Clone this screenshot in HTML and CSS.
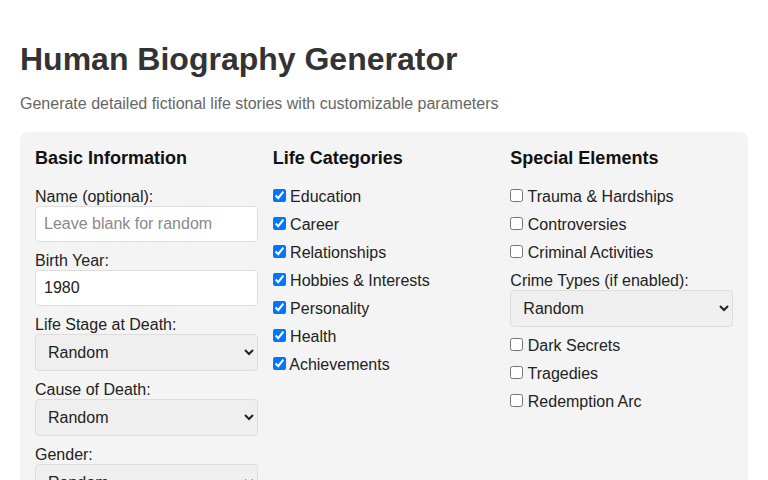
FILE: index.html
```html
<!DOCTYPE html>
<html>
<head>
<meta charset="utf-8">
<title>Human Biography Generator</title>
<link rel="stylesheet" href="styles.css">
</head>
<body>
<div class="container">
  <h1>Human Biography Generator</h1>
  <p class="subtitle">Generate detailed fictional life stories with customizable parameters</p>
  <div class="card">
    <div class="column">
      <h3>Basic Information</h3>
      <div class="form-group">
        <label class="field-label" for="name">Name (optional):</label>
        <input type="text" id="name" placeholder="Leave blank for random">
      </div>
      <div class="form-group">
        <label class="field-label" for="year">Birth Year:</label>
        <input type="text" id="year" value="1980">
      </div>
      <div class="form-group">
        <label class="field-label" for="stage">Life Stage at Death:</label>
        <select id="stage"><option>Random</option></select>
      </div>
      <div class="form-group">
        <label class="field-label" for="cause">Cause of Death:</label>
        <select id="cause"><option>Random</option></select>
      </div>
      <div class="form-group">
        <label class="field-label" for="gender">Gender:</label>
        <select id="gender"><option>Random</option></select>
      </div>
    </div>
    <div class="column">
      <h3>Life Categories</h3>
      <label class="check"><input type="checkbox" checked> Education</label>
      <label class="check"><input type="checkbox" checked> Career</label>
      <label class="check"><input type="checkbox" checked> Relationships</label>
      <label class="check"><input type="checkbox" checked> Hobbies &amp; Interests</label>
      <label class="check"><input type="checkbox" checked> Personality</label>
      <label class="check"><input type="checkbox" checked> Health</label>
      <label class="check"><input type="checkbox" checked> Achievements</label>
    </div>
    <div class="column">
      <h3>Special Elements</h3>
      <label class="check"><input type="checkbox"> Trauma &amp; Hardships</label>
      <label class="check"><input type="checkbox"> Controversies</label>
      <label class="check"><input type="checkbox"> Criminal Activities</label>
      <div class="form-group">
        <label class="field-label" for="crime">Crime Types (if enabled):</label>
        <select id="crime"><option>Random</option></select>
      </div>
      <label class="check"><input type="checkbox"> Dark Secrets</label>
      <label class="check"><input type="checkbox"> Tragedies</label>
      <label class="check"><input type="checkbox"> Redemption Arc</label>
    </div>
  </div>
</div>
</body>
</html>
```
FILE: styles.css
```css
html, body {
  margin: 0;
  padding: 0;
  background: #ffffff;
}
body {
  font-family: "Liberation Sans", Arial, sans-serif;
  font-size: 16px;
  color: #222222;
}
.container {
  padding: 20px;
}
h1 {
  font-size: 32px;
  font-weight: bold;
  margin: 21px 0 17px 0;
  color: #333333;
}
.subtitle {
  color: #666666;
  margin: 0 0 19px 0;
  line-height: 18px;
}
.card {
  background: #f4f4f4;
  border-radius: 8px;
  padding: 15px;
  display: grid;
  grid-template-columns: 1fr 1fr 1fr;
  gap: 15px;
}
.column h3 {
  font-size: 18px;
  margin: 0 0 19px 0;
  padding-top: 1px;
  line-height: 21px;
  color: #111111;
}
.form-group {
  margin-bottom: 10px;
}
.field-label {
  display: block;
  line-height: 18px;
}
input[type="text"], select {
  display: block;
  width: 100%;
  box-sizing: border-box;
  font-family: "Liberation Sans", Arial, sans-serif;
  font-size: 16px;
  padding: 8px;
  border: 1px solid #dddddd;
  border-radius: 4px;
  color: #222222;
}
input[type="text"] {
  height: 36px;
  background: #ffffff;
}
input::placeholder {
  color: #8a8a8a;
}
select {
  height: 37px;
  background: #efefef;
}
.check {
  display: block;
  line-height: 18px;
  margin-bottom: 10px;
}
.check input {
  margin: 0;
  width: 13px;
  height: 13px;
  vertical-align: 0;
}
```
